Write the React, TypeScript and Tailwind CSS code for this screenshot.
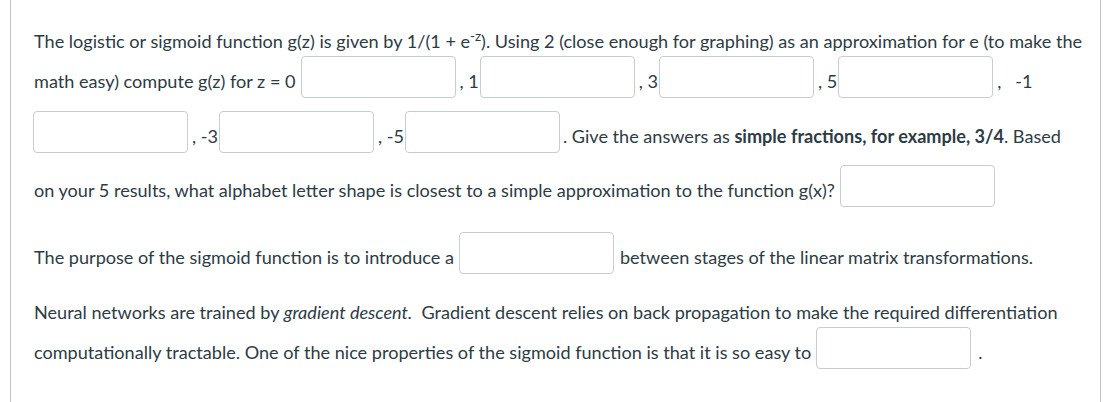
import React from "react";

function Box({ className = "" }: { className?: string }) {
  return (
    <input
      type="text"
      className={`block h-[42px] w-[155px] shrink-0 rounded-[4px] border border-[#c9cdd0] bg-white ${className}`}
    />
  );
}

function T({ children, className = "" }: { children: React.ReactNode; className?: string }) {
  return <span className={`mb-[5px] whitespace-pre leading-6 ${className}`}>{children}</span>;
}

export default function App() {
  return (
    <div className="min-h-[402px] bg-white">
      <div
        className="ml-[10px] min-h-[402px] w-[1091px] border-x border-[#bcc2c6] pl-[23px] pt-[29px] text-[18.1px] text-[#2d3b45]"
        style={{ fontFamily: "Lato, 'Noto Sans', sans-serif" }}
      >
        <div className="whitespace-pre leading-6">
          The logistic or sigmoid function g(z) is given by 1/(1 + e<sup>-z</sup>). Using 2 (close enough for graphing) as an approximation for e (to make the
        </div>

        <div className="mt-[3px] flex h-[42px] items-end">
          <T>math easy) compute g(z) for z = 0</T>
          <Box className="ml-[5px]" />
          <T className="ml-[4px]">, 1</T>
          <Box className="ml-[1px]" />
          <T className="ml-[4px]">, 3</T>
          <Box className="ml-[1px]" />
          <T className="ml-[4px]">, 5</T>
          <Box className="ml-[1px]" />
          <T className="ml-[4px]">,   -1</T>
        </div>

        <div className="mt-[13px] flex h-[42px] items-end">
          <Box className="-ml-[1px]" />
          <T className="ml-[4px]">, -3</T>
          <Box className="ml-[1px]" />
          <T className="ml-[4px]">, -5</T>
          <Box className="ml-[1px]" />
          <T className="ml-[3px]">
            . Give the answers as <b className="font-bold">simple fractions, for example, 3/4</b>. Based
          </T>
        </div>

        <div className="mt-[12px] flex h-[42px] items-end">
          <T>on your 5 results, what alphabet letter shape is closest to a simple approximation to the function g(x)?</T>
          <Box className="ml-[5px]" />
        </div>

        <div className="mt-[25px] flex h-[42px] items-end">
          <T>The purpose of the sigmoid function is to introduce a</T>
          <Box className="ml-[5px]" />
          <T className="ml-[6px]">between stages of the linear matrix transformations.</T>
        </div>

        <div className="mt-[26px] whitespace-pre leading-6">
          Neural networks are trained by <i>gradient descent.</i>{"  "}Gradient descent relies on back propagation to make the required differentiation
        </div>

        <div className="mt-[3px] flex h-[42px] items-end">
          <T>computationally tractable. One of the nice properties of the sigmoid function is that it is so easy to</T>
          <Box className="ml-[5px]" />
          <T className="ml-[7px]">.</T>
        </div>
      </div>
    </div>
  );
}
